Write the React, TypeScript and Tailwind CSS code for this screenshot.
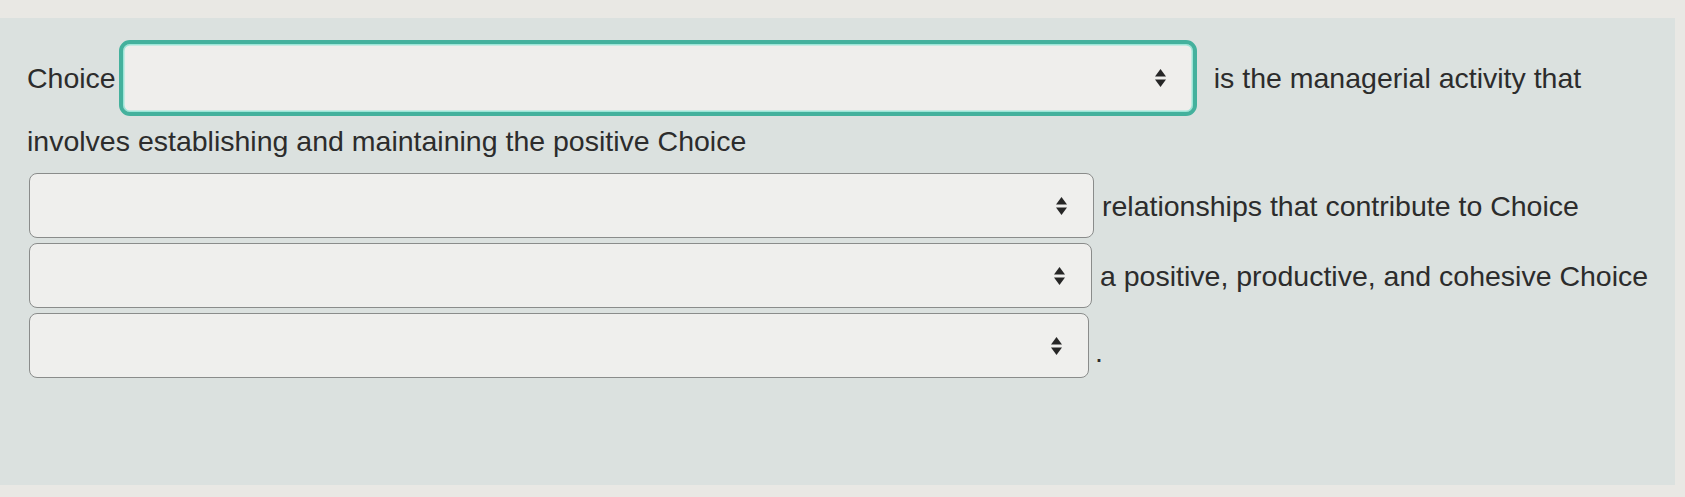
import React from "react";

function Arrows() {
  return (
    <svg width="13" height="20" viewBox="0 0 13 20" className="shrink-0">
      <path d="M6.5 1 L12 8.5 H1 Z" fill="#262626" />
      <path d="M6.5 19 L12 11.5 H1 Z" fill="#262626" />
    </svg>
  );
}

function ChoiceSelect({
  focused = false,
  className = "",
}: {
  focused?: boolean;
  className?: string;
}) {
  return (
    <div
      role="combobox"
      aria-label="Choice"
      className={
        focused
          ? `flex shrink-0 items-center justify-end rounded-[11px] border-[4px] border-[#44b19d] bg-[#efeeec] pr-[26px] shadow-[inset_0_0_0_1.5px_#9ce6d8] ${className}`
          : `flex shrink-0 items-center justify-end rounded-[8px] border-[1.5px] border-[#8a8c8b] bg-[#efefed] pr-[25px] ${className}`
      }
    >
      <Arrows />
    </div>
  );
}

export default function App() {
  return (
    <div className="h-[497px] overflow-hidden bg-[#e9e8e4] pt-[18px] pr-[10px]">
      <div className="h-[467px] bg-[#dbe1df] pl-[27px] pt-[22px] font-['Liberation_Sans',Arial,sans-serif] text-[28.5px] leading-[34px] text-[#2c2c2c]">
        <div className="flex items-center">
          <span>Choice</span>
          <ChoiceSelect focused className="ml-[3px] h-[76px] w-[1078px]" />
          <span className="ml-[17px]">is the managerial activity that</span>
        </div>
        <div className="mt-[8px]">
          involves establishing and maintaining the positive Choice
        </div>
        <div className="mt-[15px] ml-[2px] flex flex-col gap-[5px]">
          <div className="flex items-center">
            <ChoiceSelect className="h-[65px] w-[1065px]" />
            <span className="ml-[8px]">
              relationships that contribute to Choice
            </span>
          </div>
          <div className="flex items-center">
            <ChoiceSelect className="h-[65px] w-[1063px]" />
            <span className="ml-[8px]">
              a positive, productive, and cohesive Choice
            </span>
          </div>
          <div className="flex items-center">
            <ChoiceSelect className="h-[65px] w-[1060px]" />
            <span className="ml-[6px] mt-3">.</span>
          </div>
        </div>
      </div>
    </div>
  );
}
